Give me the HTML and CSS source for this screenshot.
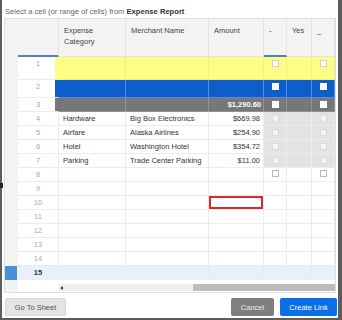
FILE: index.html
```html
<!DOCTYPE html>
<html lang="en">
<head>
    <meta charset="UTF-8">
    <meta name="viewport" content="width=device-width, initial-scale=1.0">
    <title>Select Cells</title>
    <link rel="stylesheet" href="styles.css">
</head>
<body>
    <div class="dialog">
        <p class="prompt">Select a cell (or range of cells) from <b>Expense Report</b></p>

        <div class="sheet">
            <table class="cells">
                <colgroup>
                    <col class="c-gut"><col class="c-num"><col class="c-cat"><col class="c-merch">
                    <col class="c-amt"><col class="c-dash"><col class="c-yes"><col class="c-us">
                </colgroup>
                <!-- Header -->
                <tr class="head">
                    <th class="gut"></th>
                    <th class="mark"></th>
                    <th>Expense Category</th>
                    <th>Merchant Name</th>
                    <th>Amount</th>
                    <th class="mark">-</th>
                    <th>Yes</th>
                    <th>_</th>
                </tr>
                <tr class="r1 yellow">
                    <td class="gut"></td><td class="num">1</td><td></td><td></td><td></td>
                    <td class="chk"><span class="box"></span></td><td class="chk"></td><td class="chk"><span class="box"></span></td>
                </tr>
                <tr class="r2 blue">
                    <td class="gut"></td><td class="num">2</td><td></td><td></td><td></td>
                    <td class="chk"><span class="box"></span></td><td class="chk"></td><td class="chk"><span class="box"></span></td>
                </tr>
                <tr class="gray">
                    <td class="gut"></td><td class="num">3</td><td></td><td></td><td class="amt total">$1,290.60</td>
                    <td class="chk"><span class="box"></span></td><td class="chk"></td><td class="chk"><span class="box"></span></td>
                </tr>
                <!-- Items -->
                <tr>
                    <td class="gut"></td><td class="num">4</td><td>Hardware</td><td>Big Box Electronics</td><td class="amt">$669.98</td>
                    <td class="chk shade"><span class="box faint"></span></td><td class="chk shade"></td><td class="chk shade"><span class="box faint"></span></td>
                </tr>
                <tr>
                    <td class="gut"></td><td class="num">5</td><td>Airfare</td><td>Alaska Airlines</td><td class="amt">$254.90</td>
                    <td class="chk shade"><span class="box faint"></span></td><td class="chk shade"></td><td class="chk shade"><span class="box faint"></span></td>
                </tr>
                <tr>
                    <td class="gut"></td><td class="num">6</td><td>Hotel</td><td>Washington Hotel</td><td class="amt">$354.72</td>
                    <td class="chk shade"><span class="box faint"></span></td><td class="chk shade"></td><td class="chk shade"><span class="box faint"></span></td>
                </tr>
                <tr>
                    <td class="gut"></td><td class="num">7</td><td>Parking</td><td>Trade Center Parking</td><td class="amt">$11.00</td>
                    <td class="chk shade"><span class="box faint"></span></td><td class="chk shade"></td><td class="chk shade"><span class="box faint"></span></td>
                </tr>
                <tr>
                    <td class="gut"></td><td class="num">8</td><td></td><td></td><td></td>
                    <td class="chk"><span class="box empty"></span></td><td class="chk"></td><td class="chk"><span class="box empty"></span></td>
                </tr>
                <!-- Blank rows -->
                <tr><td class="gut"></td><td class="num">9</td><td></td><td></td><td></td><td></td><td></td><td></td></tr>
                <tr><td class="gut"></td><td class="num">10</td><td></td><td></td><td class="picked"></td><td></td><td></td><td></td></tr>
                <tr><td class="gut"></td><td class="num">11</td><td></td><td></td><td></td><td></td><td></td><td></td></tr>
                <tr><td class="gut"></td><td class="num">12</td><td></td><td></td><td></td><td></td><td></td><td></td></tr>
                <tr><td class="gut"></td><td class="num">13</td><td></td><td></td><td></td><td></td><td></td><td></td></tr>
                <tr><td class="gut"></td><td class="num">14</td><td></td><td></td><td></td><td></td><td></td><td></td></tr>
                <tr class="current">
                    <td class="gut"><span class="flag"></span></td><td class="num">15</td><td></td><td></td><td></td><td></td><td></td><td></td>
                </tr>
            </table>
            <div class="hscroll">
                <div class="track">
                    <span class="arrow"></span>
                    <span class="thumb"></span>
                </div>
            </div>
        </div>

        <div class="actions">
            <button class="btn btn-sheet">Go To Sheet</button>
            <button class="btn btn-cancel">Cancel</button>
            <button class="btn btn-create">Create Link</button>
        </div>

        <span class="grip"></span>
    </div>
</body>
</html>
```

FILE: styles.css
```css
body {
    margin: 0;
    font-family: "Liberation Sans", Arial, sans-serif;
    font-size: 7.5px;
    color: #333;
}

.dialog {
    position: relative;
    width: 342px;
    height: 320px;
    box-sizing: border-box;
    background: #fff;
    border-left: 2px solid #5d5d5d;
    border-right: 4px solid #5d5d5d;
    border-bottom: 2px solid #5d5d5d;
}

.prompt {
    margin: 0;
    padding: 7px 0 0 3px;
    line-height: 10px;
    font-size: 7.6px;
    color: #666;
}

.prompt b {
    color: #333;
}

.sheet {
    width: 332px;
    margin: 1px 0 0 2px;
    box-sizing: border-box;
    border: 1px solid #dedede;
    background: #f3f3f2;
}

.cells {
    width: 330px;
    table-layout: fixed;
    border-collapse: separate;
    border-spacing: 0;
}

.c-gut { width: 13px; }
.c-num { width: 41px; }
.c-cat { width: 67px; }
.c-merch { width: 83px; }
.c-amt { width: 55px; }
.c-dash { width: 23px; }
.c-yes { width: 25px; }
.c-us { width: 23px; }

.cells tr { height: 14px; }
.cells tr.head { height: 38px; }
.cells tr.r1 { height: 23px; }
.cells tr.r2 { height: 18px; }

.cells th {
    padding: 6px 5px 0;
    background: #f4f3f2;
    border-right: 1px solid #e4e4e4;
    border-bottom: 1px solid #e4e4e4;
    text-align: left;
    vertical-align: top;
    font-weight: normal;
    line-height: 11px;
    color: #444;
}

.cells th.mark {
    border-bottom: 2px solid #4f7ccc;
}

.cells td {
    padding: 1px 3px 0 4px;
    background: #fff;
    border-right: 1px solid #ececec;
    border-bottom: 1px solid #ececec;
    vertical-align: top;
    line-height: 12px;
    white-space: nowrap;
    overflow: hidden;
}

.cells .gut {
    padding: 0;
    border: 0;
    background: transparent;
}

.cells td.gut {
    background: transparent;
}

.cells td.num {
    padding: 1px 0 0;
    text-align: center;
    color: #aaa;
}

.cells td.amt {
    text-align: right;
    padding-right: 3px;
}

.cells td.chk {
    padding: 0;
    text-align: center;
}

.cells td.shade {
    background: #e3e3e3;
}

.box {
    display: block;
    width: 7px;
    height: 7px;
    margin: 3px auto 0;
    box-sizing: border-box;
    background: #fff;
    border: 1px solid #cfcfcf;
}

.box.faint {
    background: #f4f4f4;
    border-color: #dcdcdc;
}

.box.empty {
    margin-top: 2px;
    border-color: #b9b9b9;
}

/* coloured rows */
.yellow td:not(.gut) {
    background: #fdfc84;
    border-color: rgba(0, 0, 0, 0.05);
}

.blue td:not(.gut) {
    background: #0e5dcd;
    border-color: rgba(255, 255, 255, 0.3);
}

.gray td:not(.gut) {
    background: #777;
    border-color: rgba(255, 255, 255, 0.2);
}

.yellow td.num,
.blue td.num,
.gray td.num {
    background: #fff;
    border-bottom-color: #ececec;
}

.yellow td.num { box-shadow: inset -3px 0 0 #fdfc84; border-right-color: #fdfc84; }
.blue td.num { box-shadow: inset -3px 0 0 #0e5dcd; border-right-color: #0e5dcd; }
.gray td.num { box-shadow: inset -3px 0 0 #777; border-right-color: #777; }

.blue .box,
.gray .box {
    border-color: #fff;
}

.cells td.total {
    color: #fff;
    font-weight: bold;
    padding-right: 2px;
}

.cells td.picked {
    box-shadow: inset 0 0 0 2px #e4262c;
}

.current td:not(.gut) {
    background: #e9f0fb;
}

.current td.num {
    color: #333;
    font-weight: bold;
}

.flag {
    display: block;
    width: 12px;
    height: 14px;
    background: #4a8fd8;
}

.hscroll {
    height: 12px;
    margin-left: 13px;
    padding-left: 41px;
    background: #fff;
    display: flex;
    align-items: flex-start;
}

.track {
    flex: 1;
    height: 7px;
    margin-top: 4px;
    background: #efefef;
    display: flex;
    align-items: center;
}

.arrow {
    width: 0;
    height: 0;
    margin-left: 1px;
    border-top: 2px solid transparent;
    border-bottom: 2px solid transparent;
    border-right: 3px solid #444;
}

.thumb {
    width: 142px;
    height: 7px;
    margin-left: auto;
    background: #bdbdbd;
}

.actions {
    display: flex;
    gap: 6px;
    padding: 5px 1px 0 3px;
}

.btn {
    height: 18px;
    padding: 0;
    border: 0;
    border-radius: 2px;
    font-family: inherit;
    font-size: 7.5px;
}

.btn-sheet {
    width: 61px;
    background: #e4e4e4;
    border: 1px solid #d6d6d6;
    color: #555;
}

.btn-cancel {
    width: 43px;
    margin-left: auto;
    background: #7f7f7f;
    color: #eee;
}

.btn-create {
    width: 57px;
    background: #0b6fe8;
    color: #fff;
}

.grip {
    position: absolute;
    left: -2px;
    top: 183px;
    width: 3px;
    height: 5px;
    background: #222;
}
```
